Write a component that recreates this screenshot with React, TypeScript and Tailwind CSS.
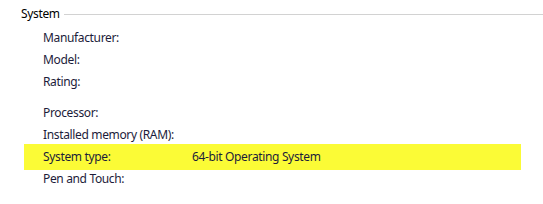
import React from 'react';

type Row = { label: string; value?: string; highlight?: boolean };

const groups: Row[][] = [
  [{ label: 'Manufacturer:' }, { label: 'Model:' }, { label: 'Rating:' }],
  [
    { label: 'Processor:' },
    { label: 'Installed memory (RAM):' },
    { label: 'System type:', value: '64-bit Operating System', highlight: true },
    { label: 'Pen and Touch:' },
  ],
];

function InfoRow({ row }: { row: Row }) {
  if (row.highlight) {
    return (
      <div className="flex items-center h-[26px] -my-[2px] bg-[#fbfb36] pl-[19px]">
        <span className="w-[149px] shrink-0">{row.label}</span>
        <span>{row.value}</span>
      </div>
    );
  }
  return (
    <div className="flex items-center h-[22px] pl-[19px]">
      <span className="w-[149px] shrink-0">{row.label}</span>
      <span>{row.value}</span>
    </div>
  );
}

export default function App() {
  return (
    <div
      className="w-[543px] h-[204px] bg-white pt-[3px] text-[12px] tracking-[-0.35px] text-[#1c1c3a]"
      style={{ fontFamily: '"Noto Sans", "Segoe UI", sans-serif' }}
    >
      {/* Section header */}
      <div className="flex items-center h-[22px] pl-[21px]">
        <span className="text-black">System</span>
        <div className="flex-1 h-px bg-[#d2d2d2] ml-[4px]" />
      </div>

      {/* Rows */}
      <div className="ml-[24px] w-[497px] mt-[2px] flex flex-col">
        {groups.map((g, i) => (
          <div key={i} className={i > 0 ? 'mt-[9px] flex flex-col' : 'flex flex-col'}>
            {g.map((r) => (
              <InfoRow key={r.label} row={r} />
            ))}
          </div>
        ))}
      </div>
    </div>
  );
}
